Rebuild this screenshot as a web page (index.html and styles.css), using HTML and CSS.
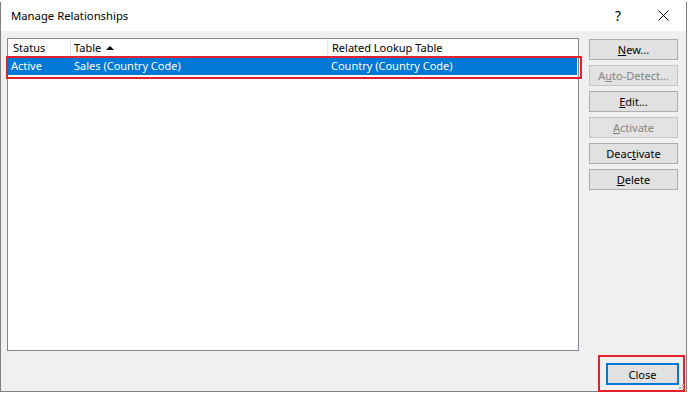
FILE: index.html
```html
<!DOCTYPE html>
<html lang="en">
<head>
  <meta charset="UTF-8" />
  <meta name="viewport" content="width=device-width, initial-scale=1.0" />
  <title>Manage Relationships</title>
  <link rel="stylesheet" href="styles.css">
</head>
<body>
  <div class="backdrop"></div>
  <div class="dialog">
    <div class="titlebar">
      <span class="title">Manage Relationships</span>
      <span class="help">?</span>
      <svg class="close-x" width="11" height="11" viewBox="0 0 11 11">
        <path d="M0.5 0.5 L10.5 10.5 M10.5 0.5 L0.5 10.5" stroke="#000" stroke-width="1" fill="none" />
      </svg>
    </div>

    <div class="content">
      <div class="main">
        <div class="list">
          <div class="list-head">
            <div class="cell c1">Status</div>
            <div class="cell c2">Table<span class="sort"></span></div>
            <div class="cell c3">Related Lookup Table</div>
          </div>
          <div class="row selected">
            <div class="cell c1">Active</div>
            <div class="cell c2">Sales (Country Code)</div>
            <div class="cell c3">Country (Country Code)</div>
          </div>
        </div>

        <div class="actions">
          <button class="btn"><u>N</u>ew...</button>
          <button class="btn" disabled>A<u>u</u>to-Detect...</button>
          <button class="btn"><u>E</u>dit...</button>
          <button class="btn" disabled><u>A</u>ctivate</button>
          <button class="btn">Deac<u>t</u>ivate</button>
          <button class="btn"><u>D</u>elete</button>
        </div>
      </div>

      <div class="footer">
        <button class="btn close-btn">Close</button>
      </div>
    </div>

    <!-- highlight marks -->
    <div class="mark mark-row"></div>
    <div class="mark mark-close"></div>
    <div class="grip"></div>
  </div>
</body>
</html>
```

FILE: styles.css
```css
* {
  box-sizing: border-box;
}
body {
  margin: 0;
  width: 688px;
  height: 394px;
  overflow: hidden;
  background: #fff;
  font-family: "Noto Sans", "Open Sans", sans-serif;
  font-size: 11px;
  color: #000;
}
.backdrop {
  height: 2px;
  background: #fff;
}
.dialog {
  position: relative;
  width: 687px;
  border: 1px solid #7f7f7f;
  border-top: none;
}
.titlebar {
  height: 29px;
  background: #fff;
  display: flex;
  align-items: center;
  padding-left: 10px;
}
.title {
  font-size: 11.3px;
  padding-bottom: 2px;
}
.help {
  margin-left: auto;
  font-size: 14px;
  padding-bottom: 2px;
}
.close-x {
  margin-left: 37px;
  margin-right: 17px;
  margin-bottom: 2px;
}
.content {
  height: 360px;
  background: #f0f0f0;
  padding: 7px 7px 6px 6px;
  display: flex;
  flex-direction: column;
}
.main {
  display: flex;
  height: 313px;
}
.list {
  width: 572px;
  height: 313px;
  background: #fff;
  border: 1px solid #828790;
}
.list-head {
  display: flex;
  height: 19px;
  line-height: 18px;
}
.list-head .cell {
  padding-left: 5px;
  border-right: 1px solid #e5e5e5;
}
.list-head .c2 {
  padding-left: 3px;
}
.list-head .c3 {
  border-right: none;
  padding-left: 4px;
}
.cell {
  white-space: nowrap;
}
.c1 {
  width: 63px;
}
.c2 {
  width: 257px;
}
.c3 {
  flex: 1;
}
.sort {
  display: inline-block;
  width: 0;
  height: 0;
  margin-left: 5px;
  margin-bottom: 2px;
  border-left: 4px solid transparent;
  border-right: 4px solid transparent;
  border-bottom: 4px solid #000;
  vertical-align: middle;
}
.row {
  display: flex;
  height: 17px;
  line-height: 16px;
  margin-right: 1px;
}
.row .cell {
  padding-left: 3px;
}
.row.selected {
  background: #0078d7;
  color: #fff;
}
.actions {
  margin-left: 10px;
  margin-top: 1px;
  width: 89px;
  display: flex;
  flex-direction: column;
  gap: 5px;
}
.btn {
  height: 21px;
  padding: 0;
  background: #e1e1e1;
  border: 1px solid #adadad;
  font-family: inherit;
  font-size: 11px;
  color: #000;
}
.btn:disabled {
  background: #e3e3e3;
  border-color: #c4c4c4;
  color: #838383;
}
.footer {
  display: flex;
  justify-content: flex-end;
  margin-top: 12px;
}
.close-btn {
  width: 73px;
  height: 22px;
  border: 2px solid #0078d7;
}
.mark {
  position: absolute;
  border: 2px solid #e3202b;
}
.mark-row {
  left: 5px;
  top: 54px;
  width: 576px;
  height: 23px;
}
.mark-close {
  left: 597px;
  top: 353px;
  width: 87px;
  height: 37px;
}
.grip {
  position: absolute;
  right: 1px;
  bottom: 1px;
  width: 9px;
  height: 9px;
  background: radial-gradient(circle at 1px 1px, #b0b0b0 1px, transparent 1px) 0 0 / 3px 3px;
  clip-path: polygon(100% 0, 100% 100%, 0 100%);
}
```
